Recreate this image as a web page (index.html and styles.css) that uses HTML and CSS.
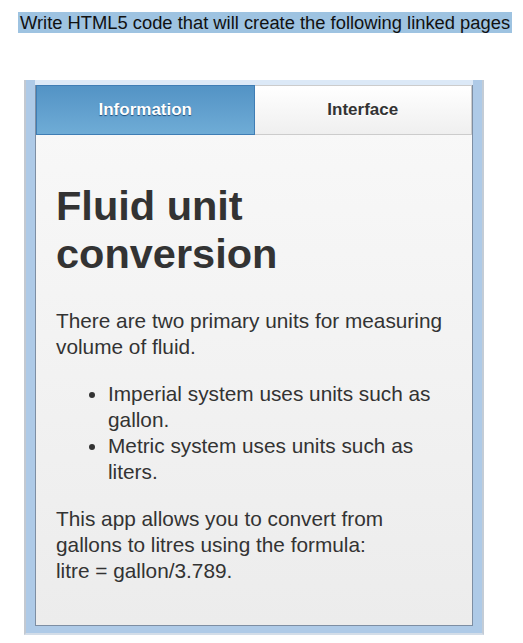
FILE: index.html
```html
<!DOCTYPE html>
<html lang="en">
<head>
<meta charset="utf-8">
<title>Fluid unit conversion</title>
<link rel="stylesheet" href="styles.css">
</head>
<body>
  <div class="prompt"><span class="prompt-text">Write HTML5 code that will create the following linked pages</span></div>
  <div class="frame">
    <div class="strip"></div>
    <div class="panel">
      <nav class="tabs">
        <a class="tab tab-active" href="#">Information</a>
        <a class="tab" href="#">Interface</a>
      </nav>
      <div class="content">
        <h1 class="title">Fluid unit conversion</h1>
        <p class="text">There are two primary units for measuring volume of fluid.</p>
        <ul class="list">
          <li>Imperial system uses units such as gallon.</li>
          <li>Metric system uses units such as liters.</li>
        </ul>
        <p class="text">This app allows you to convert from gallons to litres using the formula:<br>litre = gallon/3.789.</p>
      </div>
    </div>
  </div>
</body>
</html>
```
FILE: styles.css
```css
html, body {
  margin: 0;
  padding: 0;
  background: #ffffff;
}
body {
  font-family: "Liberation Sans", Arial, sans-serif;
  width: 523px;
  height: 643px;
  overflow: hidden;
}
.prompt {
  padding: 12px 0 0 18px;
  height: 21px;
}
.prompt-text {
  display: inline-block;
  background: #9ec3e1;
  color: #111;
  font-size: 18.35px;
  line-height: 21px;
  padding: 0 2px;
  white-space: nowrap;
}
.frame {
  margin: 47px 0 0 24px;
  width: 460px;
  box-sizing: border-box;
  background: #aecae7;
  border-left: 2px solid #c3c9d1;
  border-right: 2px solid #c3ccd6;
  border-bottom: 2px solid #d3dde8;
  padding: 0 9px 7px 9px;
}
.strip {
  height: 5px;
  background: #dce9f7;
}
.panel {
  border: 1px solid #7d8ea3;
  border-top: none;
  background: linear-gradient(#f9f9f9, #ececec);
  height: 541px;
  box-sizing: border-box;
}
.tabs {
  display: flex;
}
.tab {
  flex: 1;
  height: 50px;
  box-sizing: border-box;
  display: flex;
  align-items: center;
  justify-content: center;
  font-size: 17px;
  font-weight: bold;
  text-decoration: none;
  color: #333;
  background: linear-gradient(#ffffff, #efefef);
  border: 1px solid #cccccc;
  border-left: none;
  text-shadow: 0 1px 0 #ffffff;
}
.tab-active {
  color: #ffffff;
  background: linear-gradient(#5393c5, #6facd6);
  border: 1px solid #3f7db4;
  text-shadow: 0 1px 1px #1e4e7c;
}
.content {
  padding: 20px 26px 20px 20px;
  color: #333;
}
.title {
  font-size: 41.5px;
  line-height: 48px;
  font-weight: bold;
  margin: 27px 0 30px;
}
.text {
  font-size: 20.8px;
  line-height: 26px;
  margin: 21px 0;
}
.list {
  font-size: 20.8px;
  line-height: 26px;
  margin: 21px 0;
  padding-left: 52px;
}
```
